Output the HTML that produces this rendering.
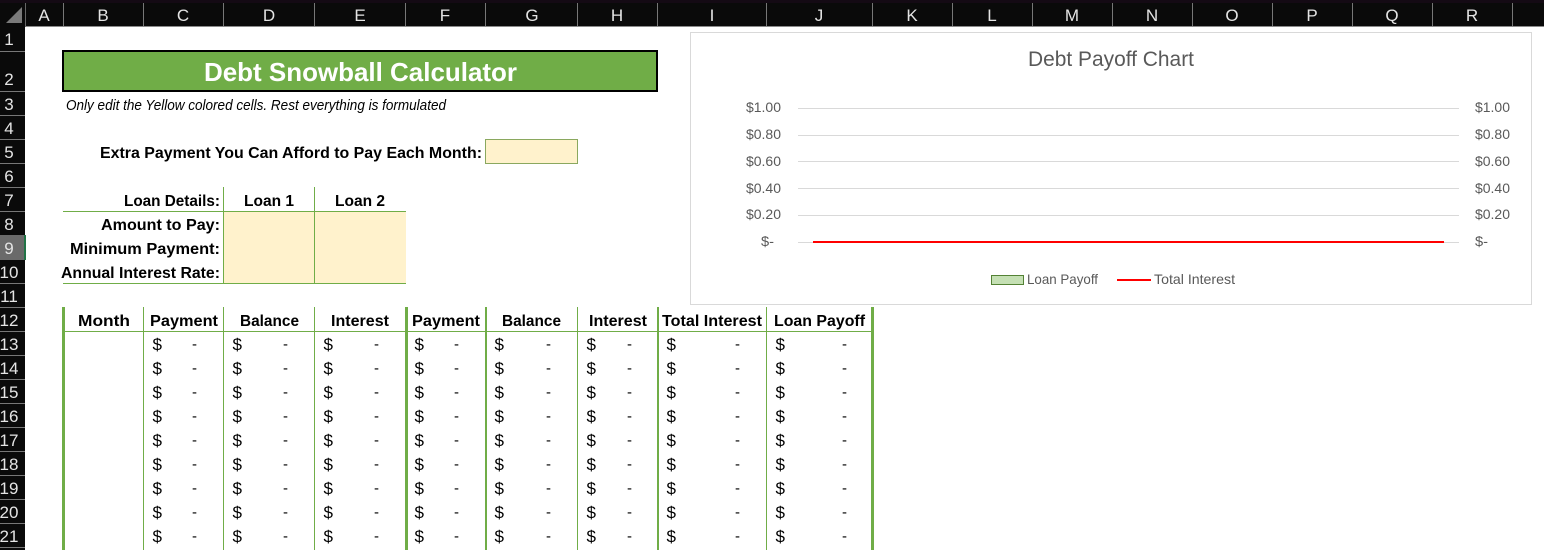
<!DOCTYPE html>
<html lang="en">
<head>
<meta charset="utf-8">
<title>Debt Snowball Calculator</title>
<style>
html,body{margin:0;padding:0;background:#fff;width:1544px;height:550px;overflow:hidden}
svg{display:block;font-family:"Liberation Sans",sans-serif}
.h text{fill:#e4e4e4;font-size:17px;text-anchor:middle}
.b{font-weight:700;font-size:16px;fill:#000}
.s{font-size:17px;fill:#000}
.m{font-size:15px;fill:#000}
.c{font-size:14px;fill:#595959}
</style>
</head>
<body>
<svg width="1544" height="550" viewBox="0 0 1544 550" xmlns="http://www.w3.org/2000/svg">
<rect width="1544" height="550" fill="#fff"/>
<!-- column header -->
<rect width="1544" height="26" fill="#0a0a0a"/>
<rect width="1544" height="3" fill="#140a14"/>
<rect y="26" width="1544" height="1" fill="#8a8a8a"/>
<!-- row header -->
<rect y="26" width="25" height="524" fill="#0a0a0a"/>
<rect x="25" y="3" width="1" height="24" fill="#666"/>
<polygon points="22,7 22,23 6,23" fill="#7a7a7a"/>
<g fill="#777">
<rect x="63" y="3" width="1" height="23"/><rect x="143" y="3" width="1" height="23"/><rect x="223" y="3" width="1" height="23"/><rect x="314" y="3" width="1" height="23"/><rect x="405" y="3" width="1" height="23"/><rect x="485" y="3" width="1" height="23"/><rect x="577" y="3" width="1" height="23"/><rect x="657" y="3" width="1" height="23"/><rect x="766" y="3" width="1" height="23"/><rect x="872" y="3" width="1" height="23"/><rect x="952" y="3" width="1" height="23"/><rect x="1032" y="3" width="1" height="23"/><rect x="1112" y="3" width="1" height="23"/><rect x="1192" y="3" width="1" height="23"/><rect x="1272" y="3" width="1" height="23"/><rect x="1352" y="3" width="1" height="23"/><rect x="1432" y="3" width="1" height="23"/><rect x="1512" y="3" width="1" height="23"/>
<rect y="51" width="25" height="1"/><rect y="91" width="25" height="1"/><rect y="115" width="25" height="1"/><rect y="139" width="25" height="1"/><rect y="163" width="25" height="1"/><rect y="187" width="25" height="1"/><rect y="211" width="25" height="1"/><rect y="235" width="25" height="1"/><rect y="259" width="25" height="1"/><rect y="283" width="25" height="1"/><rect y="307" width="25" height="1"/><rect y="331" width="25" height="1"/><rect y="355" width="25" height="1"/><rect y="379" width="25" height="1"/><rect y="403" width="25" height="1"/><rect y="427" width="25" height="1"/><rect y="451" width="25" height="1"/><rect y="475" width="25" height="1"/><rect y="499" width="25" height="1"/><rect y="523" width="25" height="1"/><rect y="547" width="25" height="1"/>
</g>
<rect y="235" width="24" height="25" fill="#6a6a6a"/>
<rect x="24" y="235" width="2" height="25" fill="#217346"/>
<g class="h">
<text x="44" y="21">A</text><text x="103" y="21">B</text><text x="183" y="21">C</text><text x="269" y="21">D</text><text x="360" y="21">E</text><text x="445" y="21">F</text><text x="532" y="21">G</text><text x="617" y="21">H</text><text x="712" y="21">I</text><text x="819" y="21">J</text><text x="912" y="21">K</text><text x="992" y="21">L</text><text x="1072" y="21">M</text><text x="1152" y="21">N</text><text x="1232" y="21">O</text><text x="1312" y="21">P</text><text x="1392" y="21">Q</text><text x="1472" y="21">R</text>
<text x="9" y="45">1</text><text x="9" y="85">2</text><text x="9" y="110">3</text><text x="9" y="134">4</text><text x="9" y="158">5</text><text x="9" y="182">6</text><text x="9" y="206">7</text><text x="9" y="230">8</text><text x="9" y="254">9</text><text x="9" y="278">10</text><text x="9" y="302">11</text><text x="9" y="326">12</text><text x="9" y="350">13</text><text x="9" y="374">14</text><text x="9" y="398">15</text><text x="9" y="422">16</text><text x="9" y="446">17</text><text x="9" y="470">18</text><text x="9" y="494">19</text><text x="9" y="518">20</text><text x="9" y="542">21</text>
</g>
<!-- title -->
<rect x="63" y="51" width="594" height="40" fill="#70ad47" stroke="#000" stroke-width="2"/>
<text x="204" y="81" font-size="26" font-weight="700" fill="#fff" textLength="313" lengthAdjust="spacingAndGlyphs">Debt Snowball Calculator</text>
<text x="66" y="110" font-size="14.5" font-style="italic" fill="#000" textLength="380" lengthAdjust="spacingAndGlyphs">Only edit the Yellow colored cells. Rest everything is formulated</text>
<text class="b" x="100" y="158" textLength="382" lengthAdjust="spacingAndGlyphs">Extra Payment You Can Afford to Pay Each Month:</text>
<rect x="485.5" y="139.5" width="92" height="24" fill="#fff2cc" stroke="#8aa85f"/>
<!-- loan table -->
<rect x="224" y="212" width="182" height="71" fill="#fff2cc"/>
<g fill="#70ad47">
<rect x="63" y="211" width="343" height="1"/><rect x="63" y="283" width="343" height="1"/>
<rect x="223" y="187" width="1" height="97"/><rect x="314" y="187" width="1" height="97"/>
</g>
<text class="b" x="124" y="206" textLength="96" lengthAdjust="spacingAndGlyphs">Loan Details:</text>
<text class="b" x="244" y="206" textLength="50" lengthAdjust="spacingAndGlyphs">Loan 1</text>
<text class="b" x="335" y="206" textLength="50" lengthAdjust="spacingAndGlyphs">Loan 2</text>
<text class="b" x="101" y="230" textLength="119" lengthAdjust="spacingAndGlyphs">Amount to Pay:</text>
<text class="b" x="70" y="254" textLength="150" lengthAdjust="spacingAndGlyphs">Minimum Payment:</text>
<text class="b" x="61" y="278" textLength="159" lengthAdjust="spacingAndGlyphs">Annual Interest Rate:</text>
<!-- main table -->
<g fill="#70ad47">
<rect x="62" y="307" width="3" height="243"/><rect x="405" y="307" width="3" height="243"/><rect x="485" y="307" width="2" height="243"/><rect x="657" y="307" width="2" height="243"/><rect x="871" y="307" width="3" height="243"/>
<rect x="143" y="307" width="1" height="243"/><rect x="223" y="307" width="1" height="243"/><rect x="314" y="307" width="1" height="243"/><rect x="577" y="307" width="1" height="243"/><rect x="766" y="307" width="1" height="243"/>
<rect x="65" y="331" width="806" height="1"/>
</g>
<text class="b" x="78" y="326" textLength="52" lengthAdjust="spacingAndGlyphs">Month</text>
<text class="b" x="150" y="326" textLength="68" lengthAdjust="spacingAndGlyphs">Payment</text>
<text class="b" x="240" y="326" textLength="59" lengthAdjust="spacingAndGlyphs">Balance</text>
<text class="b" x="331" y="326" textLength="58" lengthAdjust="spacingAndGlyphs">Interest</text>
<text class="b" x="412" y="326" textLength="68" lengthAdjust="spacingAndGlyphs">Payment</text>
<text class="b" x="502" y="326" textLength="59" lengthAdjust="spacingAndGlyphs">Balance</text>
<text class="b" x="589" y="326" textLength="58" lengthAdjust="spacingAndGlyphs">Interest</text>
<text class="b" x="662" y="326" textLength="100" lengthAdjust="spacingAndGlyphs">Total Interest</text>
<text class="b" x="774" y="326" textLength="91" lengthAdjust="spacingAndGlyphs">Loan Payoff</text>
<text class="s" y="350" x="152.5 232.5 323.5 414.5 494.5 586.5 666.5 775.5">$$$$$$$$</text>
<text class="s" y="374" x="152.5 232.5 323.5 414.5 494.5 586.5 666.5 775.5">$$$$$$$$</text>
<text class="s" y="398" x="152.5 232.5 323.5 414.5 494.5 586.5 666.5 775.5">$$$$$$$$</text>
<text class="s" y="422" x="152.5 232.5 323.5 414.5 494.5 586.5 666.5 775.5">$$$$$$$$</text>
<text class="s" y="446" x="152.5 232.5 323.5 414.5 494.5 586.5 666.5 775.5">$$$$$$$$</text>
<text class="s" y="470" x="152.5 232.5 323.5 414.5 494.5 586.5 666.5 775.5">$$$$$$$$</text>
<text class="s" y="494" x="152.5 232.5 323.5 414.5 494.5 586.5 666.5 775.5">$$$$$$$$</text>
<text class="s" y="518" x="152.5 232.5 323.5 414.5 494.5 586.5 666.5 775.5">$$$$$$$$</text>
<text class="s" y="542" x="152.5 232.5 323.5 414.5 494.5 586.5 666.5 775.5">$$$$$$$$</text>
<text class="m" y="349" x="192 283 374 454 546 627 735 842">--------</text>
<text class="m" y="373" x="192 283 374 454 546 627 735 842">--------</text>
<text class="m" y="397" x="192 283 374 454 546 627 735 842">--------</text>
<text class="m" y="421" x="192 283 374 454 546 627 735 842">--------</text>
<text class="m" y="445" x="192 283 374 454 546 627 735 842">--------</text>
<text class="m" y="469" x="192 283 374 454 546 627 735 842">--------</text>
<text class="m" y="493" x="192 283 374 454 546 627 735 842">--------</text>
<text class="m" y="517" x="192 283 374 454 546 627 735 842">--------</text>
<text class="m" y="541" x="192 283 374 454 546 627 735 842">--------</text>
<!-- chart -->
<rect x="690.5" y="32.5" width="841" height="272" fill="#fff" stroke="#d9d9d9"/>
<text x="1028" y="66" font-size="21" fill="#595959" textLength="166" lengthAdjust="spacingAndGlyphs">Debt Payoff Chart</text>
<g fill="#d9d9d9">
<rect x="798" y="108" width="661" height="1"/><rect x="798" y="135" width="661" height="1"/><rect x="798" y="161" width="661" height="1"/><rect x="798" y="188" width="661" height="1"/><rect x="798" y="215" width="661" height="1"/><rect x="798" y="242" width="661" height="1"/>
</g>
<rect x="813" y="241" width="631" height="2" fill="#ff0000"/>
<text class="c" x="746" y="112" textLength="35" lengthAdjust="spacingAndGlyphs">$1.00</text>
<text class="c" x="746" y="139" textLength="35" lengthAdjust="spacingAndGlyphs">$0.80</text>
<text class="c" x="746" y="166" textLength="35" lengthAdjust="spacingAndGlyphs">$0.60</text>
<text class="c" x="746" y="193" textLength="35" lengthAdjust="spacingAndGlyphs">$0.40</text>
<text class="c" x="746" y="219" textLength="35" lengthAdjust="spacingAndGlyphs">$0.20</text>
<text class="c" x="761" y="246" textLength="13" lengthAdjust="spacingAndGlyphs">$-</text>
<text class="c" x="1475" y="112" textLength="35" lengthAdjust="spacingAndGlyphs">$1.00</text>
<text class="c" x="1475" y="139" textLength="35" lengthAdjust="spacingAndGlyphs">$0.80</text>
<text class="c" x="1475" y="166" textLength="35" lengthAdjust="spacingAndGlyphs">$0.60</text>
<text class="c" x="1475" y="193" textLength="35" lengthAdjust="spacingAndGlyphs">$0.40</text>
<text class="c" x="1475" y="219" textLength="35" lengthAdjust="spacingAndGlyphs">$0.20</text>
<text class="c" x="1475" y="246" textLength="13" lengthAdjust="spacingAndGlyphs">$-</text>
<rect x="991.5" y="275.5" width="32" height="9" fill="#c5e0b4" stroke="#548235"/>
<text x="1027" y="284" font-size="14" fill="#595959" textLength="71" lengthAdjust="spacingAndGlyphs">Loan Payoff</text>
<rect x="1117" y="279" width="34" height="2" fill="#ff0000"/>
<text x="1154" y="284" font-size="14" fill="#595959" textLength="81" lengthAdjust="spacingAndGlyphs">Total Interest</text>
</svg>
</body>
</html>
